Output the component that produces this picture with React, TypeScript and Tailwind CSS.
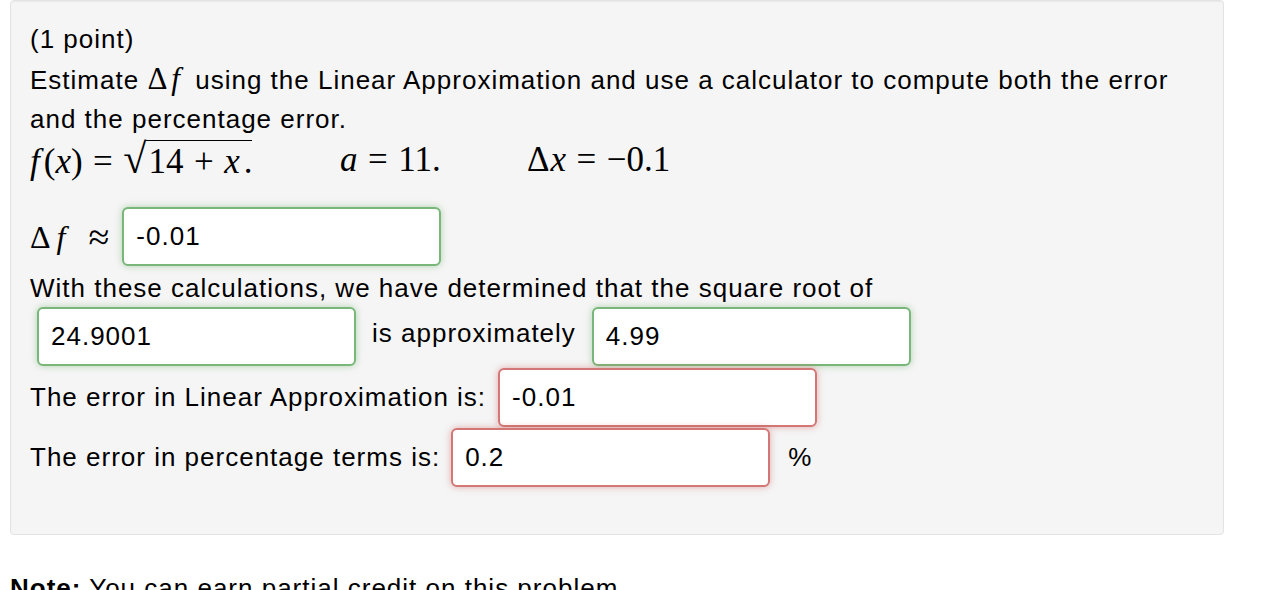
import React from "react";

type Status = "correct" | "incorrect";

function Answer({ value, status, className = "" }: { value: string; status: Status; className?: string }) {
    const tone =
        status === "correct"
            ? "border-[#78b679] shadow-[0_0_7px_rgba(110,176,110,0.5)]"
            : "border-[#d27676] shadow-[0_0_7px_rgba(206,100,100,0.5)]";
    return (
        <div
            className={`flex h-[59px] w-[319px] shrink-0 items-center rounded-[6px] border-2 bg-white pl-[12px] ${tone} ${className}`}
        >
            {value}
        </div>
    );
}

function M({ children, className = "" }: { children: React.ReactNode; className?: string }) {
    return (
        <span className={`font-['Liberation_Serif','Times_New_Roman',serif] tracking-normal ${className}`}>
            {children}
        </span>
    );
}

// relation / binary operator with TeX-like spacing
function Op({ children }: { children: React.ReactNode }) {
    return <span className="mx-[0.3em]">{children}</span>;
}

export default function App() {
    return (
        <div className="h-[590px] w-[1286px] overflow-hidden bg-white font-['Liberation_Sans',Arial,sans-serif] text-[26px] tracking-[1px] text-black">
            <div className="ml-[10px] h-[535px] w-[1214px] rounded-[4px] border border-[#e3e3e3] bg-[#f5f5f5] px-[19px] pt-[19px] shadow-[inset_0_1px_1px_rgba(0,0,0,0.05)]">
                <p className="leading-[39px]">(1 point)</p>
                <p className="leading-[39px]">
                    Estimate{" "}
                    <M className="mr-[4px] text-[31px]">
                        Δ<i className="ml-[4px] mr-[3px]">f</i>
                    </M>{" "}
                    using the Linear Approximation and use a calculator to compute both the error and the
                    percentage error.
                </p>
                <div className="flex h-[40px] items-center text-[35px] leading-none">
                    <M className="w-[310px] shrink-0">
                        <i className="mr-[4px]">f</i>(<i>x</i>)<Op>=</Op>
                        <span className="text-[42px]">√</span>
                        <span className="border-t-[1.5px] border-black pl-[2px] pt-[1px]">
                            14<Op>+</Op>
                            <i className="mr-[4px]">x</i>.
                        </span>
                    </M>
                    <M className="w-[187px] shrink-0">
                        <i>a</i>
                        <Op>=</Op>11.
                    </M>
                    <M>
                        Δ<i className="ml-[1px]">x</i>
                        <Op>=</Op>−0.1
                    </M>
                </div>

                <div className="mt-[28px] flex items-center">
                    <M className="flex items-center text-[32px]">
                        Δ<i className="ml-[6px]">f</i>
                        <span className="ml-[23px] text-[38px] leading-none">≈</span>
                    </M>
                    <Answer value="-0.01" status="correct" className="ml-[13px]" />
                </div>

                <p className="h-[41px] pt-[2px] leading-[41px]">
                    With these calculations, we have determined that the square root of
                </p>

                <div className="flex items-center">
                    <Answer value="24.9001" status="correct" className="ml-[7px]" />
                    <span className="ml-[16px] pb-[6px]">is approximately</span>
                    <Answer value="4.99" status="correct" className="ml-[16px]" />
                </div>

                <div className="mt-[2px] flex items-center">
                    <span>The error in Linear Approximation is:</span>
                    <Answer value="-0.01" status="incorrect" className="ml-[12px]" />
                </div>

                <div className="mt-[1px] flex items-center">
                    <span>The error in percentage terms is:</span>
                    <Answer value="0.2" status="incorrect" className="ml-[11px]" />
                    <span className="ml-[18px]">%</span>
                </div>
            </div>

            <p className="mt-[38px] pl-[10px] leading-[30px]">
                <b>Note:</b> You can earn partial credit on this problem.
            </p>
        </div>
    );
}
